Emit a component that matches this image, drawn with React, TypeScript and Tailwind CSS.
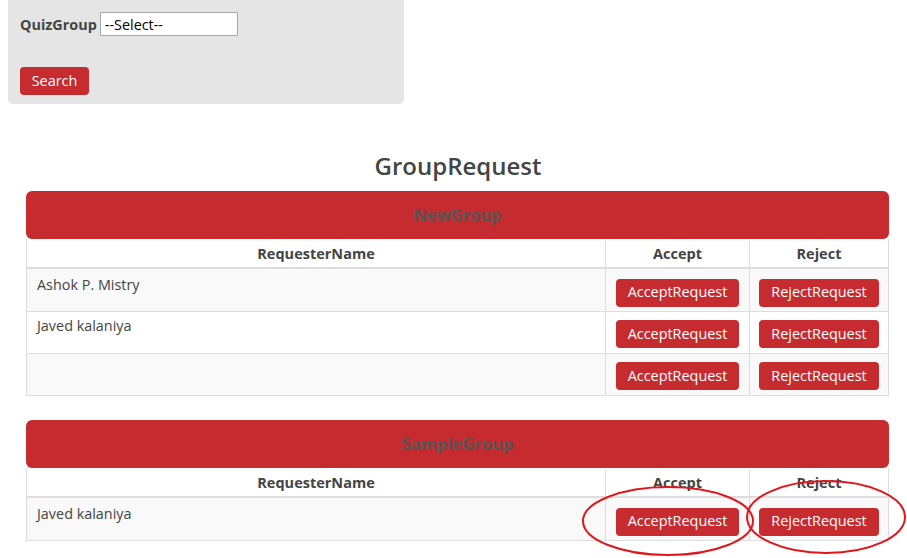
const font = { fontFamily: '"Open Sans", "Liberation Sans", sans-serif' };

type Group = { name: string; rows: string[] };

const groups: Group[] = [
  { name: "NewGroup", rows: ["Ashok P. Mistry", "Javed kalaniya", ""] },
  { name: "SampleGroup", rows: ["Javed kalaniya"] },
];

function RedButton({ label, w }: { label: string; w: string }) {
  return (
    <button
      className={`${w} h-[28px] rounded-[4px] bg-[#c62b2f] text-white text-[14.4px] leading-none flex items-center justify-center`}
    >
      {label}
    </button>
  );
}

function GroupTable({ group }: { group: Group }) {
  return (
    <div className="w-[863px]">
      <div className="h-[48px] rounded-[6px] bg-[#c62b2f] flex items-center justify-center text-[16.6px] font-bold text-[#555]">
        {group.name}
      </div>
      <div className="border border-[#ddd] border-t-0">
        <div className="flex h-[30px] border-b-2 border-[#ddd] bg-white text-[14.5px] font-bold text-[#444] pt-[2px]">
          <div className="w-[579px] flex items-center justify-center border-r border-[#ddd]">
            RequesterName
          </div>
          <div className="w-[144px] flex items-center justify-center border-r border-[#ddd]">
            Accept
          </div>
          <div className="flex-1 flex items-center justify-center">Reject</div>
        </div>
        {group.rows.map((name, i) => (
          <div
            key={i}
            className={`flex h-[42px] text-[14.4px] text-[#444] ${
              i > 0 ? "border-t border-[#ddd]" : ""
            } ${i % 2 === 0 ? "bg-[#f9f9f9]" : "bg-white"}`}
          >
            <div
              className={`w-[579px] pl-[10px] ${i > 0 ? "pt-[3px]" : "pt-[5px]"} border-r border-[#ddd]`}
            >
              {name}
            </div>
            <div
              className={`w-[144px] flex items-center justify-center border-r border-[#ddd] ${i > 0 ? "pt-[3px]" : "pt-[5px]"}`}
            >
              <RedButton label="AcceptRequest" w="w-[123px]" />
            </div>
            <div
              className={`flex-1 flex items-center justify-center ${i > 0 ? "pt-[3px]" : "pt-[5px]"}`}
            >
              <RedButton label="RejectRequest" w="w-[120px]" />
            </div>
          </div>
        ))}
      </div>
    </div>
  );
}

export default function App() {
  return (
    <div className="relative w-[907px] h-[558px] overflow-hidden bg-white" style={font}>
      {/* Filter panel */}
      <div className="ml-[8px] w-[396px] h-[104px] bg-[#e5e5e5] rounded-b-[5px] pl-[12px] pt-[12px]">
        <div className="flex items-center gap-[3px]">
          <span className="text-[14.4px] font-bold text-[#444] pt-[2px]">QuizGroup</span>
          <div className="w-[138px] h-[24px] bg-white border border-[#a9a9a9] text-[14.4px] text-black pl-[4px] pt-[1px] flex items-center">
            --Select--
          </div>
        </div>
        <button className="mt-[31px] w-[69px] h-[28px] rounded-[4px] bg-[#c62b2f] text-white text-[14.4px] flex items-center justify-center">
          Search
        </button>
      </div>

      <h2 className="mt-[45px] text-center text-[24px] font-semibold text-[#444] leading-[33px] pl-[9px]">
        GroupRequest
      </h2>

      <div className="ml-[26px] mt-[9px] flex flex-col gap-[24px]">
        {groups.map((g) => (
          <GroupTable key={g.name} group={g} />
        ))}
      </div>

      {/* annotation circles */}
      <svg className="absolute left-0 top-0 pointer-events-none" width="907" height="558">
        <ellipse cx="668" cy="521" rx="85" ry="34" fill="none" stroke="#e0161c" strokeWidth="2" />
        <ellipse cx="826" cy="517" rx="79" ry="36" fill="none" stroke="#e0161c" strokeWidth="2" />
      </svg>
    </div>
  );
}
